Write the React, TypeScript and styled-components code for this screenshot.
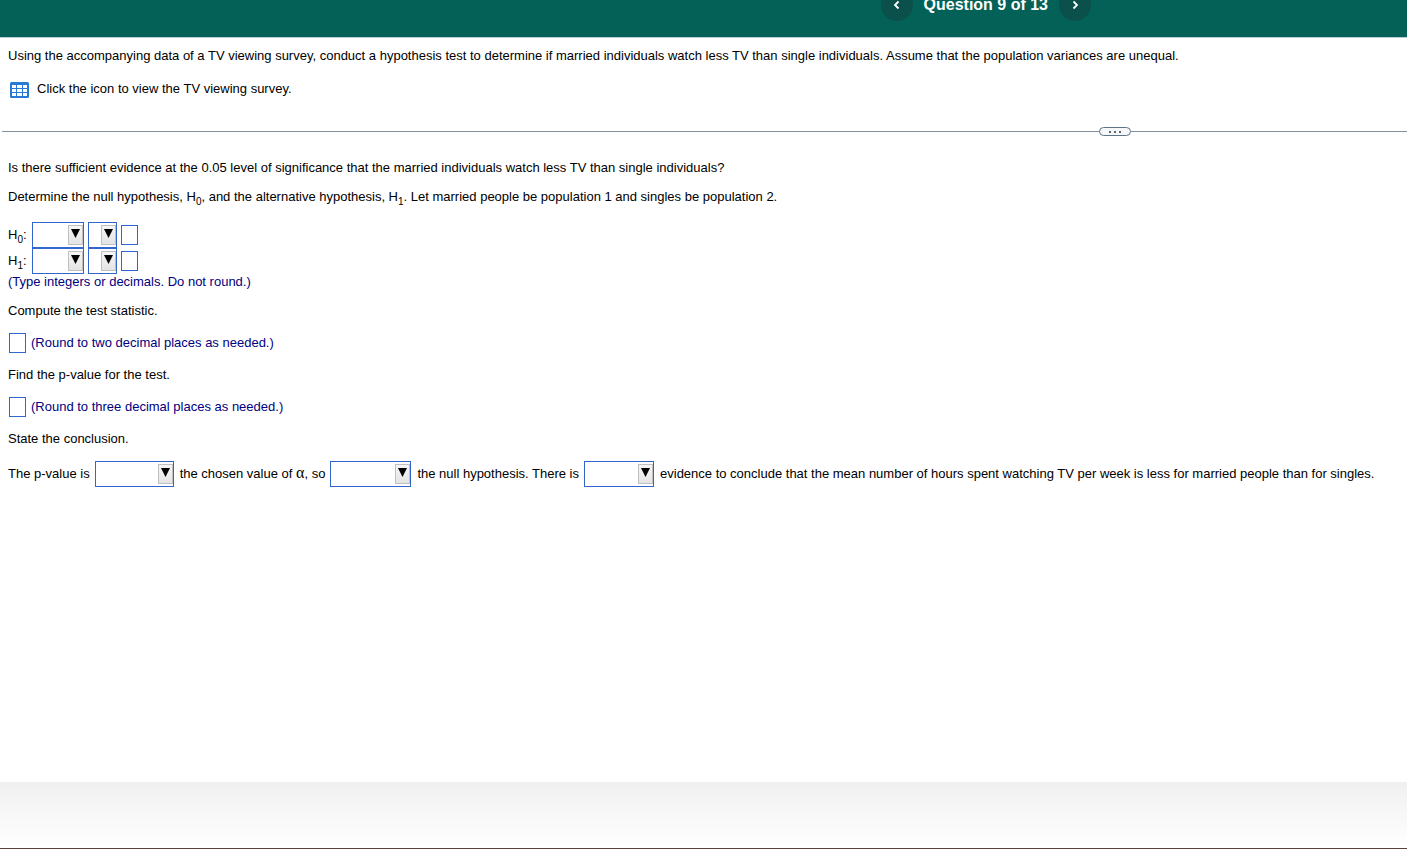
import React from "react";
import styled, { createGlobalStyle } from "styled-components";

const GlobalStyle = createGlobalStyle`
  * { box-sizing: border-box; }
  body {
    margin: 0;
    background: #fff;
    color: #000;
    font: 13px/16px "Liberation Sans", Arial, sans-serif;
  }
  p { margin: 0; }
`;

const Page = styled.div`
  min-height: 100vh;
  display: flex;
  flex-direction: column;
`;

const Header = styled.header`
  height: 38px;
  flex: none;
  display: flex;
  align-items: flex-end;
  justify-content: flex-end;
  gap: 11px;
  padding: 0 316px 16px 0;
  background: #036157;
  border-bottom: 1px solid #b9cbd3;
  overflow: hidden;
`;

const RoundButton = styled.button`
  width: 32px;
  height: 32px;
  flex: none;
  display: flex;
  align-items: center;
  justify-content: center;
  padding: 0;
  border: 0;
  border-radius: 50%;
  background: #0b504b;
  color: #fff;
`;

const Title = styled.h1`
  margin: 0;
  padding-bottom: 6px;
  color: #fff;
  font-size: 16px;
  line-height: 20px;
  font-weight: bold;
  white-space: nowrap;
`;

const Section = styled.section`
  display: flex;
  flex-direction: column;
  align-items: flex-start;
  gap: ${(p: { $gap: number }) => p.$gap}px;
  padding: 0 8px;
`;

const Intro = styled(Section)`
  padding-top: 10px;
`;

const Questions = styled(Section)`
  padding-top: 24px;
`;

const Hypotheses = styled.div`
  padding-top: 4px;
`;

const DataLink = styled.a`
  display: flex;
  align-items: flex-start;
  gap: 8px;
  padding-left: 2px;
  color: inherit;
  text-decoration: none;

  svg { margin-top: 1px; }
`;

const Divider = styled.div`
  display: flex;
  align-items: center;
  height: 9px;
  margin: 29px 0 0 2px;
`;

const Rule = styled.div`
  height: 1px;
  flex: ${(p: { $fill?: boolean }) => (p.$fill ? "1" : "0 0 276px")};
  background: #8490a2;
`;

const Handle = styled.button`
  width: 32px;
  height: 9px;
  flex: none;
  display: flex;
  align-items: center;
  justify-content: center;
  gap: 3px;
  padding: 0;
  border: 1px solid #5f7384;
  border-radius: 5px;
  background: #f5f7f9;
`;

const Dot = styled.span`
  width: 2px;
  height: 2px;
  background: #5a6472;
`;

const Row = styled.div`
  display: flex;
  align-items: center;
  gap: 4px;
`;

const RowLabel = styled.span`
  width: 20px;
`;

const Sub = styled.sub`
  font-size: 10px;
  line-height: 0;
  vertical-align: -4px;
`;

const Hint = styled.p`
  color: #000080;
`;

const Alpha = styled.span`
  font-family: "Liberation Serif", "Times New Roman", serif;
  font-size: 16px;
  line-height: 0;
`;

const SelectBox = styled.span`
  position: relative;
  flex: none;
  width: ${(p: { $width: number }) => p.$width}px;
  height: 26px;
`;

const Sentence = styled(Row)`
  gap: 5px;
  padding-top: 1px;
  white-space: nowrap;

  ${SelectBox} { margin-right: 1px; }
`;

const Select = styled.select`
  appearance: none;
  display: block;
  width: 100%;
  height: 100%;
  margin: 0;
  padding: 0 18px 0 4px;
  border: 1px solid #3366cc;
  border-radius: 0;
  background: #fff;
  font: inherit;
`;

const Arrow = styled.span`
  position: absolute;
  top: 3px;
  right: 1px;
  width: 15px;
  height: 20px;
  display: flex;
  justify-content: center;
  padding-top: 3px;
  border: 1px solid #c0c0c0;
  background: linear-gradient(#f6f6f6, #e4e4e4);
  pointer-events: none;
`;

const Answer = styled.input`
  width: 17px;
  height: 20px;
  flex: none;
  margin: 0;
  padding: 0 2px;
  border: 1px solid #3366cc;
  border-radius: 0;
  background: #fff;
  font: inherit;
`;

const AnswerLabel = styled.label`
  display: flex;
  align-items: center;
  gap: 5px;
  padding: 1px 0 1px 1px;
  color: #000080;
`;

const Footer = styled.footer`
  height: 67px;
  flex: none;
  margin-top: auto;
  background: linear-gradient(#f0f0f0, #fff);
  border-bottom: 1px solid #59403f;
`;

function Chevron({ d }: { d: string }) {
  return (
    <svg width="10" height="10" viewBox="0 0 10 10" fill="none" stroke="currentColor" strokeWidth="1.8" aria-hidden="true">
      <path d={d} />
    </svg>
  );
}

function TableIcon() {
  return (
    <svg width="19" height="16" viewBox="0 0 19 16" aria-hidden="true">
      <rect width="19" height="16" rx="1.5" fill="#2878d8" />
      {[3, 7, 11].map((y) =>
        [2, 7, 13].map((x) => <rect key={`${x}-${y}`} x={x} y={y} width={x === 7 ? 5 : 4} height="3" fill="#fff" />)
      )}
    </svg>
  );
}

function DropDown({ width, label, options }: { width: number; label: string; options: string[] }) {
  return (
    <SelectBox $width={width}>
      <Select aria-label={label} defaultValue="">
        <option value="" />
        {options.map((o) => (
          <option key={o}>{o}</option>
        ))}
      </Select>
      <Arrow>
        <svg width="9" height="9" viewBox="0 0 9 9" aria-hidden="true">
          <path d="M0 0h9L4.5 9z" />
        </svg>
      </Arrow>
    </SelectBox>
  );
}

function HypothesisRow({ index }: { index: number }) {
  return (
    <Row>
      <RowLabel>
        H<Sub>{index}</Sub>:
      </RowLabel>
      <DropDown width={52} label={`H${index} parameter`} options={["μ1 − μ2", "μ1", "μ2"]} />
      <DropDown width={29} label={`H${index} relation`} options={["=", "≠", "<", ">", "≤", "≥"]} />
      <Answer aria-label={`H${index} value`} />
    </Row>
  );
}

export default function App() {
  return (
    <Page>
      <GlobalStyle />
      <Header>
        <RoundButton aria-label="Previous question">
          <Chevron d="M6.5 1.5 3 5l3.500 3.500" />
        </RoundButton>
        <Title>Question 9 of 13</Title>
        <RoundButton aria-label="Next question">
          <Chevron d="M3.500 1.500 7 5l-3.500 3.500" />
        </RoundButton>
      </Header>
      <main>
        <Intro $gap={17}>
          <p>
            Using the accompanying data of a TV viewing survey, conduct a hypothesis test to determine if married
            individuals watch less TV than single individuals. Assume that the population variances are unequal.
          </p>
          <DataLink href="#survey">
            <TableIcon />
            <span>Click the icon to view the TV viewing survey.</span>
          </DataLink>
        </Intro>
        <Divider>
          <Rule $fill />
          <Handle aria-label="Resize panels">
            <Dot />
            <Dot />
            <Dot />
          </Handle>
          <Rule />
        </Divider>
        <Questions $gap={13}>
          <p>
            Is there sufficient evidence at the 0.05 level of significance that the married individuals watch less TV
            than single individuals?
          </p>
          <p>
            Determine the null hypothesis, H<Sub>0</Sub>, and the alternative hypothesis, H<Sub>1</Sub>. Let married
            people be population 1 and singles be population 2.
          </p>
          <Hypotheses>
            <HypothesisRow index={0} />
            <HypothesisRow index={1} />
            <Hint>(Type integers or decimals. Do not round.)</Hint>
          </Hypotheses>
          <p>Compute the test statistic.</p>
          <AnswerLabel>
            <Answer />
            (Round to two decimal places as needed.)
          </AnswerLabel>
          <p>Find the p-value for the test.</p>
          <AnswerLabel>
            <Answer />
            (Round to three decimal places as needed.)
          </AnswerLabel>
          <p>State the conclusion.</p>
          <Sentence>
            <span>The p-value is</span>
            <DropDown width={79} label="p-value comparison" options={["less than", "greater than"]} />
            <span>
              the chosen value of <Alpha>α</Alpha>, so
            </span>
            <DropDown width={81} label="Decision" options={["reject", "do not reject"]} />
            <span>the null hypothesis. There is</span>
            <DropDown width={70} label="Strength of evidence" options={["sufficient", "insufficient"]} />
            <span>
              evidence to conclude that the mean number of hours spent watching TV per week is less for married people
              than for singles.
            </span>
          </Sentence>
        </Questions>
      </main>
      <Footer />
    </Page>
  );
}
